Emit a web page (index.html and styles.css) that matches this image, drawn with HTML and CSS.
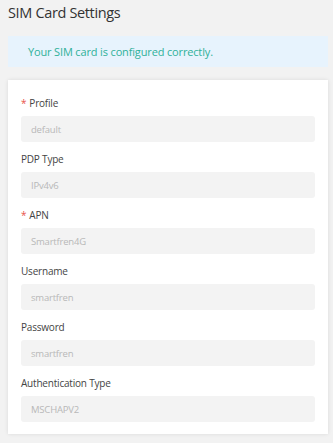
FILE: index.html
```html
<!DOCTYPE html>
<html>
<head>
<meta charset="utf-8">
<link rel="stylesheet" href="styles.css">
</head>
<body>
<div class="page">
  <h1 class="title">SIM Card Settings</h1>
  <div class="alert">Your SIM card is configured correctly.</div>
  <div class="card">
    <div class="field">
      <div class="label"><span class="req">*</span>Profile</div>
      <div class="input">default</div>
    </div>
    <div class="field">
      <div class="label">PDP Type</div>
      <div class="input">IPv4v6</div>
    </div>
    <div class="field">
      <div class="label"><span class="req">*</span>APN</div>
      <div class="input">Smartfren4G</div>
    </div>
    <div class="field">
      <div class="label">Username</div>
      <div class="input">smartfren</div>
    </div>
    <div class="field">
      <div class="label">Password</div>
      <div class="input">smartfren</div>
    </div>
    <div class="field">
      <div class="label">Authentication Type</div>
      <div class="input">MSCHAPV2</div>
    </div>
  </div>
</div>
</body>
</html>
```

FILE: styles.css
```css
html, body {
  margin: 0;
  padding: 0;
  background: #f2f2f2;
  font-family: "Open Sans", "Noto Sans", sans-serif;
}
.page {
  padding: 3px 5px 9px 8px;
}
.title {
  margin: 0;
  font-size: 14.5px;
  font-weight: 400;
  letter-spacing: -0.35px;
  line-height: 20px;
  color: #333;
}
.alert {
  margin-top: 13px;
  height: 31px;
  box-sizing: border-box;
  padding: 0 0 0 20px;
  display: flex;
  align-items: center;
  background: #e7f3fd;
  color: #2fb19a;
  font-size: 11px;
  letter-spacing: -0.15px;
}
.card {
  margin-top: 13px;
  background: #fff;
  padding: 14px 13px 4px 13px;
  box-shadow: 0 0 4px rgba(0,0,0,0.1);
}
.field {
  margin-bottom: 8px;
}
.label {
  font-size: 10px;
  letter-spacing: -0.2px;
  line-height: 18px;
  color: #444;
  margin-bottom: 4px;
}
.req {
  color: #e8534a;
  margin-right: 3px;
}
.input {
  height: 26px;
  box-sizing: border-box;
  padding: 0 10px;
  display: flex;
  align-items: center;
  background: #f3f3f3;
  border-radius: 3px;
  font-size: 9.5px;
  letter-spacing: -0.2px;
  color: #b8b8b8;
}
```
